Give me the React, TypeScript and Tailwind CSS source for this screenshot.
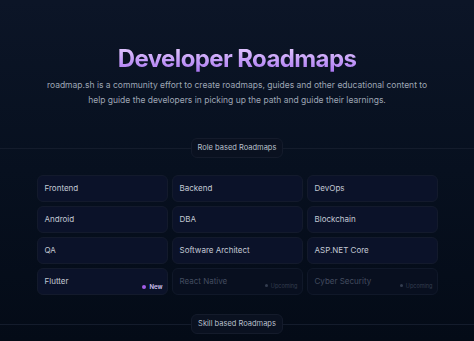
import React from 'react';

type Item = { name: string; tag?: 'new' | 'upcoming' };

const roles: Item[] = [
  { name: 'Frontend' },
  { name: 'Backend' },
  { name: 'DevOps' },
  { name: 'Android' },
  { name: 'DBA' },
  { name: 'Blockchain' },
  { name: 'QA' },
  { name: 'Software Architect' },
  { name: 'ASP.NET Core' },
  { name: 'Flutter', tag: 'new' },
  { name: 'React Native', tag: 'upcoming' },
  { name: 'Cyber Security', tag: 'upcoming' },
];

function SectionLabel({ label }: { label: string }) {
  return (
    <div className="relative flex justify-center">
      <div className="absolute left-0 right-0 top-1/2 h-px bg-[#141c2c]" />
      <span className="relative h-[20px] px-[6px] flex items-center rounded-md bg-[#0a1120] border border-[#141b2b] text-[7.5px] text-[#b9c0cc]">
        {label}
      </span>
    </div>
  );
}

function Card({ item }: { item: Item }) {
  const upcoming = item.tag === 'upcoming';
  return (
    <div
      className={`relative h-[27px] rounded-md border px-[7px] flex items-center text-[8px] ${
        upcoming
          ? 'bg-[#080f1f] border-[#101829] text-[#434c5f]'
          : 'bg-[#0b1229] border-[#131a2c] text-[#c3c9d4]'
      }`}
    >
      <span className="-mt-[1px]">{item.name}</span>
      {item.tag === 'new' && (
        <span className="absolute right-[4px] bottom-[3px] flex items-center gap-[3px] text-[6px] font-semibold text-[#d4c3f5]">
          <span className="h-[4px] w-[4px] rounded-full bg-[#a35ee8]" />
          New
        </span>
      )}
      {upcoming && (
        <span className="absolute right-[4px] bottom-[4px] flex items-center gap-[3px] text-[5.5px] text-[#343d50]">
          <span className="h-[3px] w-[3px] rounded-full bg-[#343d50]" />
          Upcoming
        </span>
      )}
    </div>
  );
}

export default function App() {
  return (
    <div
      className="w-full h-[341px] overflow-hidden bg-gradient-to-b from-[#0c1527] via-[#07101f] to-[#040b17]"
      style={{ fontFamily: 'Inter, "Noto Sans", sans-serif' }}
    >
      {/* Hero */}
      <div className="flex flex-col items-center pt-[43px]">
        <h1 className="text-[24px] leading-[32px] font-bold tracking-tight bg-gradient-to-b from-[#ecd4ff] to-[#a56bef] bg-clip-text text-transparent">
          Developer Roadmaps
        </h1>
        <p className="mt-[3px] w-[392px] text-center text-[8.5px] leading-[15px] text-[#9ea6b5]">
          roadmap.sh is a community effort to create roadmaps, guides and other educational content to help guide the developers in picking up the path and guide their learnings.
        </p>
      </div>

      <div className="mt-[30px]">
        <SectionLabel label="Role based Roadmaps" />
      </div>

      <div className="mt-[17px] mx-auto w-[401px] grid grid-cols-3 gap-[4px]">
        {roles.map((r) => (
          <Card key={r.name} item={r} />
        ))}
      </div>

      <div className="mt-[19px]">
        <SectionLabel label="Skill based Roadmaps" />
      </div>
    </div>
  );
}
